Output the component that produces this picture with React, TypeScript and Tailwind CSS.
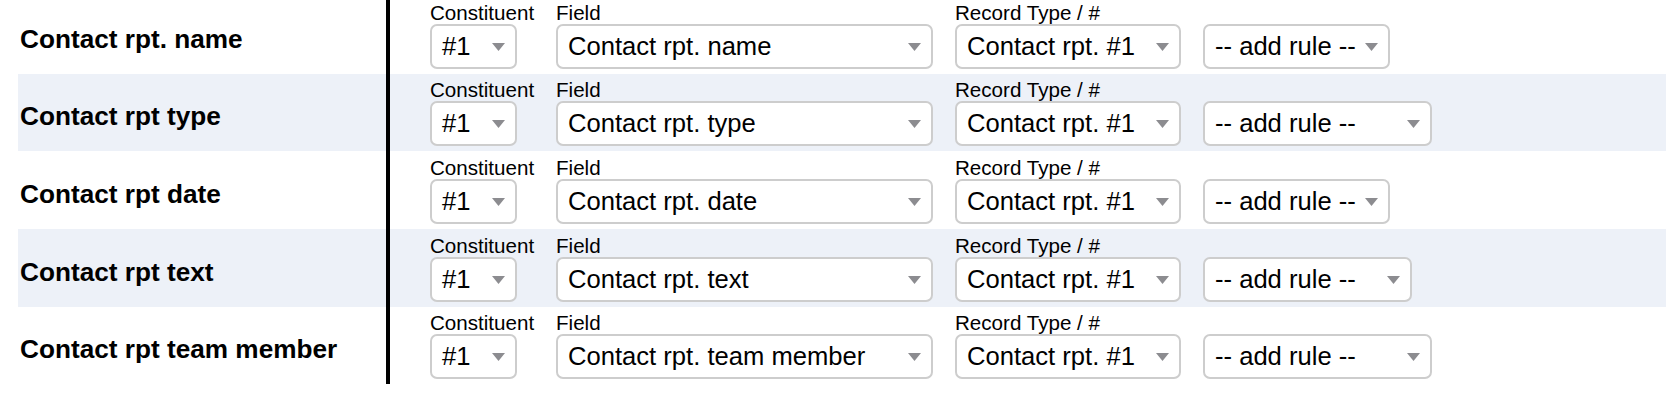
import React from "react"

interface RuleRow {
  label: string
  field: string
  addRuleWidth: string
}

const rows: RuleRow[] = [
  { label: "Contact rpt. name", field: "Contact rpt. name", addRuleWidth: "w-[187px]" },
  { label: "Contact rpt type", field: "Contact rpt. type", addRuleWidth: "w-[229px]" },
  { label: "Contact rpt date", field: "Contact rpt. date", addRuleWidth: "w-[187px]" },
  { label: "Contact rpt text", field: "Contact rpt. text", addRuleWidth: "w-[209px]" },
  { label: "Contact rpt team member", field: "Contact rpt. team member", addRuleWidth: "w-[229px]" },
]

function FakeSelect({ value, width }: { value: string; width: string }) {
  return (
    <div
      className={`relative h-[45px] ${width} rounded-[7px] border-2 border-[#cdcdcd] bg-white pl-[10px] pr-[24px] text-[25.6px] leading-[41px] text-black whitespace-nowrap overflow-hidden`}
    >
      {value}
      <svg
        className="absolute right-[10px] top-[17px]"
        width="13"
        height="8"
        viewBox="0 0 13 8"
      >
        <polygon points="0,0 13,0 6.5,8" fill="#8c8c90" />
      </svg>
    </div>
  )
}

function Group({
  label,
  value,
  width,
  groupWidth,
}: {
  label?: string
  value: string
  width: string
  groupWidth?: string
}) {
  return (
    <div className={`flex flex-col ${groupWidth ?? ""}`}>
      {label && (
        <span className="text-[20.6px] leading-[22px] text-black whitespace-nowrap">{label}</span>
      )}
      <FakeSelect value={value} width={width} />
    </div>
  )
}

export default function App() {
  return (
    <div className="bg-white w-[1672px] h-[396px] overflow-hidden font-['Liberation_Sans',Arial,sans-serif]">
      <div className="ml-[18px] w-[1648px] -mt-[4px]">
        {rows.map((row, idx) => (
          <div
            key={idx}
            className={`flex h-[77.7px] ${idx % 2 === 1 ? "bg-[#edf1f8]" : "bg-white"}`}
          >
            <div className="w-[368px] flex items-center pl-[2px] pt-[9px]">
              <span className="text-[26.2px] font-bold text-black whitespace-nowrap">{row.label}</span>
            </div>
            <div className="flex-1 border-l-4 border-black pl-[40px] pb-[5px] flex items-end gap-[22px]">
              <Group label="Constituent" value="#1" width="w-[87px]" groupWidth="w-[104px]" />
              <Group label="Field" value={row.field} width="w-[377px]" />
              <Group label="Record Type / #" value="Contact rpt. #1" width="w-[226px]" />
              <Group value="-- add rule --" width={row.addRuleWidth} />
            </div>
          </div>
        ))}
      </div>
    </div>
  )
}
